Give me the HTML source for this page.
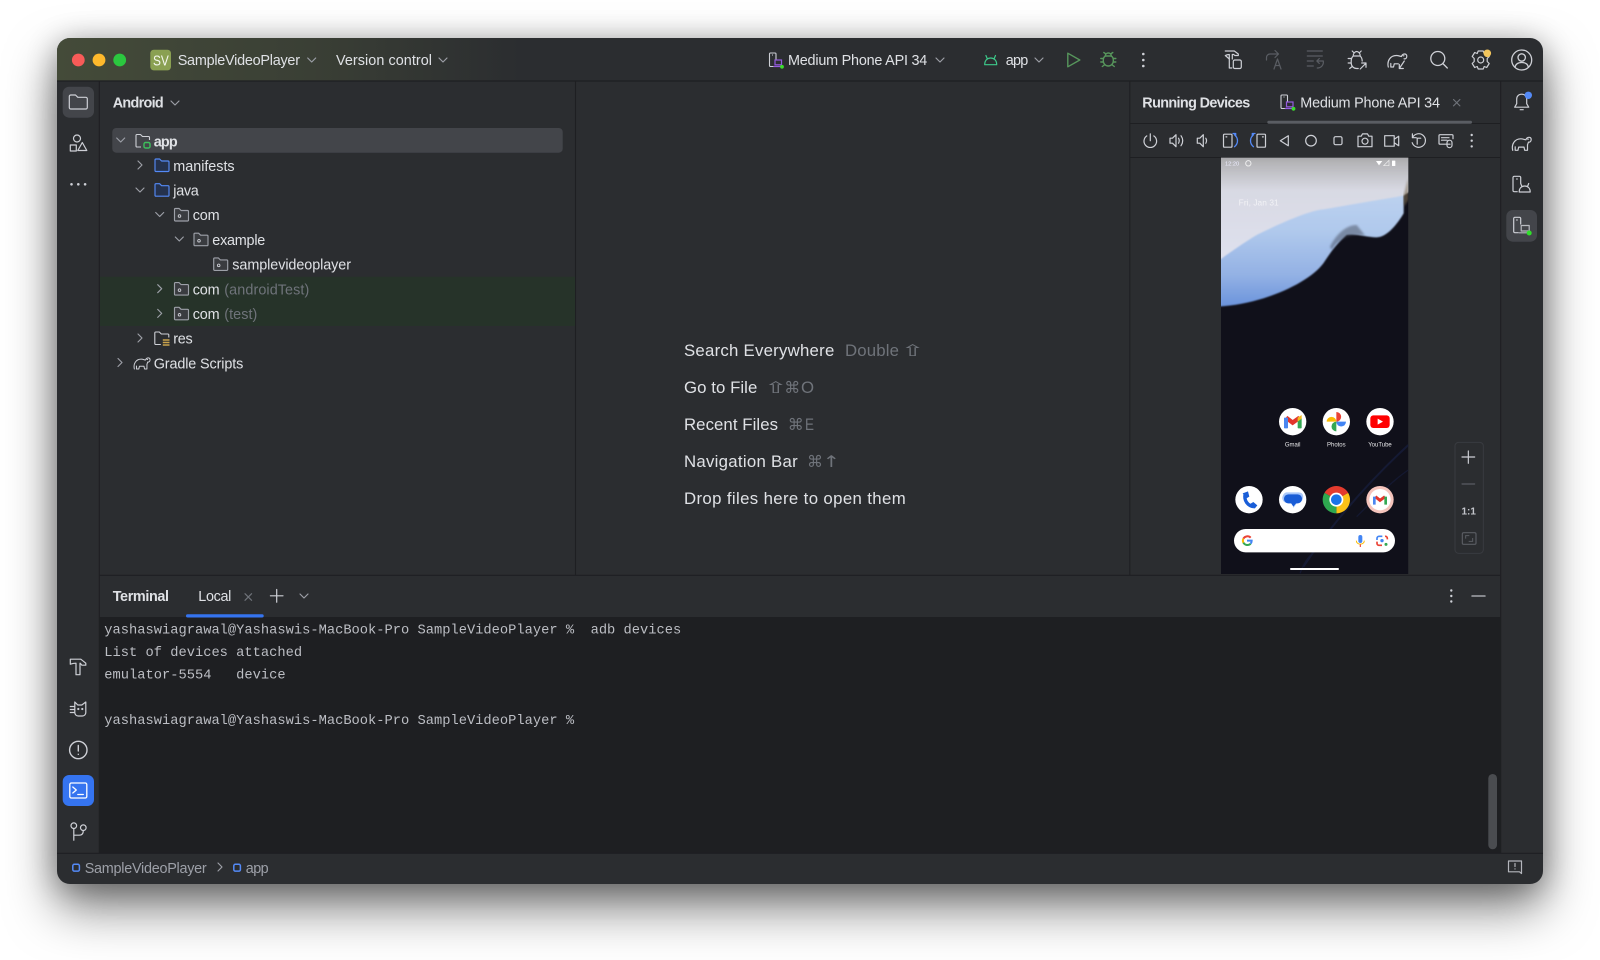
<!DOCTYPE html>
<html lang="en">
<head>
<meta charset="utf-8">
<title>Android Studio</title>
<style>
html,body{margin:0;padding:0;width:1600px;height:960px;overflow:hidden;background:#fff}
#win{position:absolute;left:57px;top:38px;width:1486px;height:846px;border-radius:13px;background:#2b2d30;box-shadow:0 24px 50px 0 rgba(0,0,0,.5),0 4px 30px rgba(0,0,0,.3)}
svg{position:absolute;left:0;top:0;filter:blur(.35px)}
text{font-family:"Liberation Sans",sans-serif;font-size:14.4px;fill:#dfe1e5;white-space:pre}
.b{font-weight:700}
.g{fill:#6f737a}
.w{font-size:16.8px}
.h{font-size:16.8px;fill:#6f737a}
.hs{font-family:"DejaVu Sans",sans-serif;font-size:16px;fill:#6f737a;text-anchor:middle}
.m{font-family:"Liberation Mono",monospace;font-size:13.74px;fill:#bcbec4}
.s{fill:#9da0a8}
.i{fill:none;stroke:#ced0d6;stroke-width:1.2;stroke-linecap:round;stroke-linejoin:round}
.d{fill:none;stroke:#5a5d63;stroke-width:1.2;stroke-linecap:round;stroke-linejoin:round}
.c{fill:none;stroke:#9da0a8;stroke-width:1.15;stroke-linecap:round;stroke-linejoin:round}
.p text{fill:#e8e8ea;font-size:18px}
</style>
</head>
<body>
<div id="win"></div>
<svg width="1600" height="960" viewBox="0 0 1600 960" xmlns="http://www.w3.org/2000/svg">
<defs>
<linearGradient id="tb" x1="0" x2="1" y1="0" y2="0"><stop offset="0" stop-color="#444b39"/><stop offset=".55" stop-color="#3a3f35"/><stop offset="1" stop-color="#2b2d30"/></linearGradient>
<linearGradient id="wh" x1="0" x2="0" y1="0" y2="1"><stop offset="0" stop-color="#88888a"/><stop offset=".16" stop-color="#b5b5b8"/><stop offset=".38" stop-color="#d8d9e3"/><stop offset="1" stop-color="#dfe2ef"/></linearGradient>
<linearGradient id="bl" x1="0" x2="0" y1="0" y2="1"><stop offset="0" stop-color="#c0d4f0"/><stop offset=".4" stop-color="#b0c9ec"/><stop offset=".75" stop-color="#93b1e4"/><stop offset="1" stop-color="#6a93dc"/></linearGradient>
<filter id="bb" x="-5%" y="-5%" width="110%" height="110%"><feGaussianBlur stdDeviation="3.500"/></filter>
<filter id="bs" x="-5%" y="-5%" width="110%" height="110%"><feGaussianBlur stdDeviation="2.500"/></filter>
<clipPath id="ph"><rect x="93" y="23" width="562" height="1249"/></clipPath>
<path id="cd" class="c" d="M-4-2L0 2L4-2"/>
<path id="cr" class="c" d="M-2-4L2 0L-2 4"/>
<g id="fb"><path d="M-7-5.500a1 1 0 0 1 1-1h3.600l2 2H6a1 1 0 0 1 1 1V5a1 1 0 0 1-1 1H-6a1 1 0 0 1-1-1z" fill="#25324d" stroke="#548af7" stroke-width="1.150" stroke-linejoin="round"/></g>
<g id="fp"><path d="M-7-5.500a1 1 0 0 1 1-1h3.600l2 2H6a1 1 0 0 1 1 1V5a1 1 0 0 1-1 1H-6a1 1 0 0 1-1-1z" fill="#3a3c40" stroke="#9da0a8" stroke-width="1.150" stroke-linejoin="round"/><circle cx="-2" cy="1" r="1.300" fill="none" stroke="#ced0d6" stroke-width=".9"/></g>
<g id="dev"><path d="M0-.5V-6.500a1 1 0 0 0-1-1h-4.500a1 1 0 0 0-1 1V5a1 1 0 0 0 1 1H-3" fill="none" stroke="#ced0d6" stroke-width="1.100" stroke-linecap="round" stroke-linejoin="round"/><path d="M-4-5.500h1" stroke="#ced0d6" stroke-width="1"/><rect x="-1" y="-.5" width="6.500" height="4.800" fill="none" stroke="#955ae0" stroke-width="1.200"/><path d="M-2.500 6H6.500" stroke="#955ae0" stroke-width="1.200"/><circle cx="6" cy="6.300" r="1.900" fill="#3ddc2e"/></g>
<path id="gr" class="i" d="M-9 7C-10.500 1-7-4.500-1-4.500C1.500-4.500 3-3.500 4.200-3.500C5-6.500 9.500-7 9.500-3.800C9.500-1.800 8-.8 6.800-1.200L5.800 1.500V7H3L2.300 3.800H-3L-3.800 7H-6.500L-6.500 3.500M6-4.200h.6"/>
</defs>

<!-- title bar -->
<path d="M57 81V51a13 13 0 0 1 13-13H520V81z" fill="url(#tb)"/>
<path d="M57 81H1543" stroke="#1e1f22" stroke-width="1.200"/>
<circle cx="78.300" cy="60" r="6.400" fill="#f85b58"/><circle cx="99" cy="60" r="6.400" fill="#feb92c"/><circle cx="119.700" cy="60" r="6.400" fill="#2bc83f"/>
<rect x="150.300" y="49.700" width="20.700" height="20.700" rx="3.500" fill="#8aa052"/>
<text transform="translate(153 65.300) scale(.82 1)" style="font-size:14.500px;fill:#f4f6ee">SV</text>
<text x="177.700" y="65" textLength="122.300">SampleVideoPlayer</text>
<use href="#cd" x="311.700" y="60"/>
<text x="336" y="65" textLength="96">Version control</text>
<use href="#cd" x="443" y="60"/>

<use href="#dev" x="776" y="60.500"/>
<text x="788" y="65" textLength="139.300">Medium Phone API 34</text>
<use href="#cd" x="940" y="60"/>
<g transform="translate(990.700 60.500)" fill="none" stroke="#3dc98a" stroke-width="1.200" stroke-linejoin="round" stroke-linecap="round"><path d="M-6 4.200C-6-.5-3-2.500 0-2.500S6-.5 6 4.200zM-3.500-2-4.800-5M3.500-2 4.800-5"/></g>
<text x="1005.700" y="65" textLength="22.600">app</text>
<use href="#cd" x="1039" y="60"/>
<path d="M-5.500-6.800L6.500 0L-5.500 6.800Z" transform="translate(1073.300 60)" fill="none" stroke="#57965c" stroke-width="1.400" stroke-linejoin="round"/>
<g transform="translate(1108.300 60)" fill="none" stroke="#57965c" stroke-width="1.400" stroke-linecap="round"><path d="M-3-4h6c1.500 1 2 2.500 2 4v1a5 5 0 0 1-10 0V0c0-1.500.5-3 2-4z"/><path d="M-3-4c0-2 1.500-3 3-3s3 1 3 3M-3-6.500-4.500-7.500M3-6.500 4.500-7.500M-5-1.500H-7.500M5-1.500H7.500M-5 2H-7.500M5 2H7.500M-4 5-6 6.500M4 5 6 6.500"/></g>
<g fill="#ced0d6"><circle cx="1143.300" cy="54" r="1.300"/><circle cx="1143.300" cy="60" r="1.300"/><circle cx="1143.300" cy="66" r="1.300"/></g>

<!-- top right icons -->
<g transform="translate(1233.300 60)" class="i"><path d="M-8-9H1L5-6V-4.500H1.500L.5-5.500H-1V-1M-4-1V-5.500C-5.500-5.500-7-5-8-4.500z"/><path d="M-4-1V8H-1.500"/><rect x="0" y="0" width="8" height="8.500" rx="1.500"/></g>
<g transform="translate(1275 60)" class="d"><path d="M-1-6H-5a3.500 3.500 0 0 0-3.500 3.500V0M3.500-6H-2M0-9.500 3.500-6 0-2.500"/><path d="M-1 9 2.500-1 6 9M.2 5.500H4.800"/></g>
<g transform="translate(1315.300 60)" class="d"><path d="M-8-9H7M-8-4H7M-8 1H-2M-8 6H-2M8 1H1.500M4-1.500 1.500 1 4 3.500M8 1C8.500 5 6 8 2 8"/></g>
<g transform="translate(1356.700 60)" class="i"><path d="M-3.500-4H3.500C5-2.500 5.500-1 5.500 1M-3.500-4C-5-2.500-5.500-1-5.500 1V3a5.500 5.500 0 0 0 5.500 5.500H1.500M-3.500-4C-3.500-7-1.500-8.500 0-8.500S3.500-7 3.500-4M-3-7.500-4.500-9M3-7.500 4.500-9M-5.500-1.500H-8.500M-5.500 3H-8.500M-4.500 6.500-7 8.500M3.500 9 9 3.500M5 3H9.300V7.300"/></g>
<g transform="translate(1397.300 60)" class="i"><path d="M-9 7C-10.500 1-7-4.500-1-4.500C1.500-4.500 3-3.500 4.200-3.500C5-6.500 9.500-7 9.500-3.800C9.500-1.800 8-.8 6.800-1.200M-6.500 7V3.500M-6.500 7H-3.800L-3 3.800H1M6-4.200h.6M7 1 2 8.500M2 4.500V8.500H6"/></g>
<g transform="translate(1439.300 60)" class="i" style="stroke-width:1.300"><circle cx="-1.500" cy="-1.500" r="7"/><path d="M3.500 3.500 8 8"/></g>
<g transform="translate(1480.700 60)" class="i"><path d="M-2.500-9H2.500L3.500-6.500L6-7.500L8.500-3.500L6.500-1.500V1.500L8.500 3.500L6 7.500L3.500 6.500L2.500 9H-2.500L-3.500 6.500L-6 7.500L-8.500 3.500L-6.500 1.500V-1.500L-8.500-3.500L-6-7.500L-3.500-6.500Z"/><circle r="3"/></g>
<circle cx="1487.300" cy="53.300" r="3.800" fill="#f2c55c"/>
<g transform="translate(1521.700 60)" class="i" style="stroke-width:1.300"><circle r="10"/><circle cy="-2.500" r="3.700"/><path d="M-6.700 7.300C-6 3.500-3 2.500 0 2.500S6 3.500 6.700 7.300"/></g>

<!-- dividers -->
<path d="M99.300 81V853M575.500 81V575M1129.800 81V575M1500.700 81V853M99 575.300H1500M1130 123.500H1500M1130 157.500H1500" stroke="#1e1f22" stroke-width="1.100" fill="none"/>

<!-- left stripe -->
<rect x="62.700" y="86.700" width="31.300" height="31" rx="6.500" fill="#43454a"/>
<path class="i" transform="translate(78.300 102)" d="M-9-5.500a1.500 1.500 0 0 1 1.500-1.500h4.700l2.300 2.300H7.500A1.500 1.500 0 0 1 9-3.200V5.500A1.500 1.500 0 0 1 7.500 7h-15A1.500 1.500 0 0 1-9 5.500z"/>
<g transform="translate(78.300 143)" class="i"><circle cx="-1.300" cy="-4.500" r="3.500"/><rect x="-8" y="2" width="6" height="6"/><path d="M4-.5L8.500 7.500H-.5Z"/></g>
<g fill="#ced0d6"><circle cx="71.500" cy="184.300" r="1.300"/><circle cx="78.300" cy="184.300" r="1.300"/><circle cx="85.100" cy="184.300" r="1.300"/></g>

<g transform="translate(78.300 666.700)" class="i"><path d="M-8-7.500H2.500L7.500-3.500V-1.500H3.500L2-3.500H1.700V8H-2.300V-3.500C-4-3.500-6.500-3-8-2.500z"/></g>
<g transform="translate(78.300 709)" class="i"><path d="M-3.500-7-.5-4H3.500L7.500-7V3.500C7.500 5.500 6 7 4 7H0C-2 7-3.500 5.500-3.500 3.500zM-8-2.500H-4M-8 .5H-4M-8 3.500H-4"/><circle cx="0" cy="0" r=".5"/><circle cx="4" cy="0" r=".5"/></g>
<g transform="translate(78.300 750)" class="i" style="stroke-width:1.400"><circle r="8.700"/><path d="M0-4.500V1M0 4.300V4.400"/></g>
<rect x="62.700" y="775" width="31.300" height="31" rx="6.500" fill="#3574f0"/>
<g transform="translate(78.300 790.500)" fill="none" stroke="#fff" stroke-width="1.300" stroke-linecap="round" stroke-linejoin="round"><rect x="-8.500" y="-7.500" width="17" height="15" rx="1.500"/><path d="M-5.500-3.500-2-.5-5.500 2.500M-.5 4H5"/></g>
<g transform="translate(78.300 831.700)" class="i"><circle cx="-4.500" cy="-6" r="2.800"/><circle cx="5" cy="-4" r="2.800"/><path d="M-4.500-3.200V8.500M-4.500 3.500H1C3.500 3.500 5 2 5-1.200"/></g>

<!-- project panel -->
<text x="112.700" y="107.300" class="b" textLength="51">Android</text>
<use href="#cd" x="175" y="103"/>
<rect x="112.300" y="128" width="450.400" height="24.700" rx="4" fill="#43454a"/>
<rect x="100" y="276.700" width="475" height="49.300" fill="#263329"/>

<use href="#cd" x="120.700" y="140"/>
<g transform="translate(142.500 141)"><path d="M-1.500 6H-5.500a1 1 0 0 1-1-1V-5.500a1 1 0 0 1 1-1H-2l2 2H6a1 1 0 0 1 1 1V-1" fill="none" stroke="#ced0d6" stroke-width="1.100" stroke-linejoin="round"/><rect x="1.500" y="1.500" width="6" height="5.500" rx="1.500" fill="none" stroke="#3dc05c" stroke-width="1.400"/></g>
<text x="153.700" y="146.400" class="b" textLength="24">app</text>

<use href="#cr" x="140" y="165"/><use href="#fb" x="162" y="165.500"/>
<text x="173.300" y="170.800" textLength="61.300">manifests</text>
<use href="#cd" x="140" y="190"/><use href="#fb" x="162" y="190.200"/>
<text x="173.300" y="195.500" textLength="25.500">java</text>
<use href="#cd" x="159.700" y="214.500"/><use href="#fp" x="181.500" y="215"/>
<text x="192.700" y="220.200" textLength="26.900">com</text>
<use href="#cd" x="179.300" y="239"/><use href="#fp" x="201" y="239.700"/>
<text x="212.300" y="244.900" textLength="53">example</text>
<use href="#fp" x="220.700" y="264.400"/>
<text x="232.300" y="269.600" textLength="118.700">samplevideoplayer</text>
<use href="#cr" x="159.700" y="288.700"/><use href="#fp" x="181.500" y="289.100"/>
<text x="192.700" y="294.300" textLength="26.900">com</text>
<text x="224.300" y="294.300" class="g" textLength="85">(androidTest)</text>
<use href="#cr" x="159.700" y="313.400"/><use href="#fp" x="181.500" y="313.800"/>
<text x="192.700" y="319" textLength="26.900">com</text>
<text x="224.300" y="319" class="g" textLength="33">(test)</text>
<use href="#cr" x="140" y="338"/>
<g transform="translate(161.800 338.500)"><path d="M-1 6H-6a1 1 0 0 1-1-1V-5.500a1 1 0 0 1 1-1h3.500l2 2H6a1 1 0 0 1 1 1V-1" fill="none" stroke="#ced0d6" stroke-width="1.100" stroke-linejoin="round"/><path d="M1 1.500H7.700M1 4H7.700M1 6.500H7.700" stroke="#c9a34c" stroke-width="1.400"/></g>
<text x="173.300" y="343.700" textLength="19.400">res</text>
<use href="#cr" x="120" y="362.500"/>
<use href="#gr" transform="translate(142 363) scale(.85)"/>
<text x="153.700" y="368.400" textLength="89.600">Gradle Scripts</text>

<!-- welcome -->
<text x="684" y="355.800" class="w" textLength="150.300">Search Everywhere</text>
<text x="845" y="355.800" class="h" textLength="54">Double</text>
<text transform="translate(912.500 356) scale(1.8 1)" class="hs">⇧</text>
<text x="684" y="392.800" class="w" textLength="73.300">Go to File</text>
<text transform="translate(775.700 393) scale(1.8 1)" class="hs">⇧</text>
<text x="792.300" y="392.800" class="hs">⌘</text>
<text x="801" y="392.800" class="h">O</text>
<text x="684" y="430" class="w" textLength="94">Recent Files</text>
<text x="795.700" y="430" class="hs">⌘</text>
<text transform="translate(805 430) scale(.8 1)" class="h">E</text>
<text x="684" y="467" class="w" textLength="113.700">Navigation Bar</text>
<text x="815" y="467" class="hs">⌘</text>
<text transform="translate(831.300 467) scale(1.3 1)" class="hs">↑</text>
<text x="684" y="504" class="w" textLength="221.700">Drop files here to open them</text>

<!-- running devices header -->
<text x="1142.300" y="107.300" class="b" textLength="108">Running Devices</text>
<use href="#dev" x="1287.500" y="102.500"/>
<text x="1300.300" y="107.300" textLength="139.700">Medium Phone API 34</text>
<path class="c" d="M1453.500 99.500L1459.900 105.900M1459.900 99.500L1453.500 105.900" style="stroke:#6f737a"/>
<path d="M1268.800 122.300H1470.500" stroke="#5a5d63" stroke-width="3" stroke-linecap="round"/>

<!-- device toolbar -->
<g class="i" transform="translate(0 140.700)">
<path transform="translate(1150.300 0)" d="M-3.500-4.800A6.300 6.300 0 1 0 3.500-4.800M0-6.800V0"/>
<path transform="translate(1177 0)" d="M-7-2.500H-4.500L-1-6V6L-4.500 2.500H-7ZM1.500-2.500Q3 0 1.500 2.500M4-5Q7.500 0 4 5"/>
<path transform="translate(1202.300 0)" d="M-5-2.500H-2.500L1-6V6L-2.500 2.500H-5ZM3.500-2.500Q5 0 3.500 2.500"/>
<rect x="1223.500" y="-6.500" width="8.500" height="13" rx="1"/><path d="M1226 -3.800H1226.800"/>
<rect x="1257" y="-6.500" width="8.500" height="13" rx="1"/><path d="M1262.500 -3.800H1263.300"/>
<path transform="translate(1284.300 0)" d="M4-5L-4 0L4 5Z"/>
<circle cx="1311" cy="0" r="5.300"/>
<rect x="1334" y="-4" width="8" height="8" rx="1.500"/>
<path transform="translate(1365 0)" d="M-7-4.500H-3.800L-2.500-6.800H2.500L3.800-4.500H7V6H-7Z"/><circle cx="1365" cy=".5" r="3"/>
<path transform="translate(1391.700 0)" d="M-7-5H2.500V5.500H-7ZM2.500-1.500L7-4.500V5L2.500 2Z"/>
<path transform="translate(1418.700 0)" d="M-6-3.500A6.800 6.800 0 1 1-6.500 2M-6.300-6.800V-3H-2.500M-1.500 3.500V-2.500H2"/>
<path transform="translate(1446 0)" d="M4 3.500H-6a1 1 0 0 1-1-1V-5a1 1 0 0 1 1-1H6a1 1 0 0 1 1 1V-2M-4.500-3H3M-4.500-.5H1"/><rect x="1447" y="-.5" width="5" height="7.500" rx="2.500"/>
</g>
<g fill="none" stroke="#548af7" stroke-width="1.300" stroke-linecap="round" stroke-linejoin="round"><path d="M1234.500 134.700C1238.500 138 1238.500 143.500 1234.500 146.700M1233 133.500H1235.700V136.200"/><path d="M1253.500 134.700C1249.500 138 1249.500 143.500 1253.500 146.700M1255 133.500H1252.300V136.200"/></g>
<g fill="#ced0d6"><circle cx="1471.700" cy="135" r="1.200"/><circle cx="1471.700" cy="140.700" r="1.200"/><circle cx="1471.700" cy="146.400" r="1.200"/></g>

<!-- right stripe -->
<g transform="translate(1521.700 101.700)" class="i"><path d="M-7 5.500H7L5 2V-2.500C5-5.500 3-7.500 0-7.500S-5-5.500-5-2.500V2ZM-1.500 8H1.500"/></g>
<circle cx="1528.300" cy="95.300" r="3.700" fill="#548af7"/>
<use href="#gr" x="1521.700" y="143.300"/>
<g transform="translate(1521.700 185)" class="i"><path d="M-1-2V-7.500a1.200 1.200 0 0 0-1.200-1.200H-7.500a1.200 1.200 0 0 0-1.200 1.200V5.500a1.200 1.200 0 0 0 1.200 1.200H-4.500M-5-6H-4.500"/><path d="M-2.500 7C-2.500 3 0 1 3 1S8.500 3 8.500 7ZM0 1-1-1.500M6 1 7-1.500"/></g>
<rect x="1506.300" y="210" width="30.700" height="31.700" rx="6.500" fill="#43454a"/>
<g transform="translate(1521.700 226)"><path class="i" d="M-1-2V-7.500a1.200 1.200 0 0 0-1.200-1.200H-6.800a1.200 1.200 0 0 0-1.200 1.200V5.500a1.200 1.200 0 0 0 1.200 1.200H-3.500M-5-6H-4.500"/><rect x="-.5" y="-.5" width="8" height="5.500" class="i" style="stroke:#b8bac0"/><path d="M-2.500 6.800H6" class="i" style="stroke:#b8bac0"/><circle cx="7.500" cy="7" r="2.500" fill="#2fe02a"/></g>

<!-- phone (coords in 3x zoom units) -->
<g transform="translate(1190 150) scale(.33333)" class="p">
<g clip-path="url(#ph)">
<rect x="93" y="23" width="562" height="1249" fill="#10101a"/>
<path d="M340 1250C420 1130 520 1010 655 885" fill="none" stroke="#151a34" stroke-width="6"/>
<path d="M500 1100C560 1040 610 990 655 960M330 1270C345 1230 360 1215 380 1200" fill="none" stroke="#141830" stroke-width="4"/>
<path d="M60 90H642L641 190C620 225 590 262 560 262C530 262 500 250 470 255C440 280 420 310 400 340C370 380 300 420 220 445C170 460 120 470 60 470Z" fill="url(#bl)" filter="url(#bs)"/>
<path d="M425 300C445 268 480 250 525 256L500 225C470 225 440 250 420 290Z" fill="#3b4150" opacity=".45" filter="url(#bb)"/>
<path d="M60-20H700V90C680 110 660 125 641 137C500 160 450 170 400 178C370 180 300 205 200 255C150 285 110 315 60 350Z" fill="url(#wh)" filter="url(#bs)"/>
<path d="M640 137C645 125 650 100 655 85V150L642 170Z" fill="#7a6a50" opacity=".6" filter="url(#bb)"/>
</g>
<text x="105" y="46" style="font-size:17px;fill:#eef">12:20</text>
<circle cx="175" cy="40" r="8" fill="none" stroke="#eee" stroke-width="3"/>
<path d="M558 33H577L567 46Z" fill="#fff"/><path d="M597 31V47H581Z" fill="none" stroke="#eee" stroke-width="2"/><rect x="606" y="32" width="10" height="16" rx="1" fill="#fff"/>
<text x="146" y="167" style="font-size:25px;fill:#f2f2f6" textLength="120">Fri, Jan 31</text>

<!-- row 1 -->
<circle cx="308" cy="815" r="41" fill="#fff"/>
<path d="M288 803L308 818L329 803" fill="none" stroke="#e3352c" stroke-width="13"/>
<rect x="282" y="803" width="12" height="32" rx="2" fill="#4a86f0"/><rect x="323" y="803" width="12" height="32" rx="2" fill="#34a853"/><path d="M323 803L335 795V806L323 815Z" fill="#f5bc1c"/>
<circle cx="439" cy="815" r="41" fill="#fff"/>
<path d="M410 815a14.500 14.500 0 0 1 29 0z" fill="#fbbc04"/><path d="M439 786a14.500 14.500 0 0 1 0 29z" fill="#ea4335"/><path d="M468 815a14.500 14.500 0 0 1-29 0z" fill="#4285f4"/><path d="M439 844a14.500 14.500 0 0 1 0-29z" fill="#34a853"/>
<circle cx="570" cy="815" r="41" fill="#fff"/>
<rect x="541" y="796" width="58" height="38" rx="9" fill="#f00"/><path d="M563 806V824L579 815Z" fill="#fff"/>
<text x="308" y="889" text-anchor="middle">Gmail</text>
<text x="439" y="889" text-anchor="middle">Photos</text>
<text x="570" y="889" text-anchor="middle">YouTube</text>

<!-- row 2 -->
<circle cx="177" cy="1049" r="41" fill="#fff"/>
<path d="M166 1030C160 1052 174 1068 192 1070" fill="none" stroke="#1a5ed8" stroke-width="10"/><path d="M158 1030L174 1024L178 1040L168 1046ZM180 1062L190 1056L202 1066L194 1076Z" fill="#1a5ed8"/>
<circle cx="308" cy="1049" r="41" fill="#fff"/>
<path d="M290 1027H326C340 1027 342 1040 338 1048C334 1058 326 1060 320 1060L310 1074V1060H296C280 1060 274 1048 278 1038C281 1030 286 1027 290 1027Z" fill="#a8c7fa"/>
<rect x="282" y="1033" width="54" height="27" rx="13" fill="#1a5dd6"/><path d="M302 1058H320L310 1070Z" fill="#1a5dd6"/>
<path d="M439 1049L403.500 1028.500A41 41 0 0 1 474.500 1028.500Z" fill="#e33b2e"/><path d="M439 1049L474.500 1028.500A41 41 0 0 1 439 1090Z" fill="#fbc116"/><path d="M439 1049L439 1090A41 41 0 0 1 403.500 1028.500Z" fill="#2ea84f"/>
<circle cx="439" cy="1049" r="21" fill="#fff"/><circle cx="439" cy="1049" r="16" fill="#1a73e8"/>
<circle cx="570" cy="1049" r="41" fill="#f5c4bc"/><circle cx="570" cy="1049" r="32" fill="#fff"/>
<path d="M556 1040L570 1051L585 1040" fill="none" stroke="#e3352c" stroke-width="9"/>
<rect x="549" y="1040" width="8" height="24" rx="1" fill="#4a86f0"/><rect x="583" y="1040" width="8" height="24" rx="1" fill="#34a853"/>

<!-- search -->
<rect x="132" y="1137" width="483" height="70" rx="35" fill="#fff"/>
<g fill="none" stroke-width="6"><path d="M182 1163A14 14 0 0 0 160 1166" stroke="#ea4335"/><path d="M160 1166A14 14 0 0 0 160 1178" stroke="#fbbc04"/><path d="M160 1178A14 14 0 0 0 182 1181" stroke="#34a853"/><path d="M182 1181A14 14 0 0 0 185 1172H171" stroke="#4285f4"/></g>
<rect x="505" y="1155" width="12" height="24" rx="6" fill="#4285f4"/><path d="M499 1172C499 1186 523 1186 523 1172" fill="none" stroke="#fbbc04" stroke-width="3"/><path d="M511 1183V1191" stroke="#ea4335" stroke-width="3.500"/>
<g fill="none" stroke-width="5"><path d="M561 1170V1165A6 6 0 0 1 567 1159H577" stroke="#4285f4"/><path d="M585 1159A6 6 0 0 1 592 1165V1168" stroke="#ea4335"/><path d="M561 1175V1180A6 6 0 0 0 567 1186H576" stroke="#ea4335"/><circle cx="576" cy="1172" r="5" fill="#4285f4" stroke="none"/></g><circle cx="588" cy="1183" r="4.500" fill="#34a853"/>
<rect x="300" y="1254" width="147" height="6" rx="3" fill="#fff"/>

<!-- zoom controls -->
<rect x="795" y="877" width="85" height="333" rx="11" fill="#2b2d30" stroke="#393b40" stroke-width="3"/>
<path d="M835 903V940M816 921H854" stroke="#ced0d6" stroke-width="3.500" stroke-linecap="round"/>
<path d="M816 1002H854" stroke="#5a5d63" stroke-width="3.500" stroke-linecap="round"/>
<text x="836" y="1094" text-anchor="middle" style="font-size:30px;font-weight:700;fill:#c4c6cc">1:1</text>
<rect x="817" y="1148" width="41" height="35" rx="4" fill="none" stroke="#5a5d63" stroke-width="3.500"/><path d="M827 1166V1157H838M848 1164V1174H836" fill="none" stroke="#5a5d63" stroke-width="3"/>
</g>

<!-- terminal -->
<rect x="99.800" y="617" width="1400.400" height="236" fill="#1e1f22"/>
<text x="112.700" y="601" class="b" textLength="56.300">Terminal</text>
<text x="198.300" y="601" textLength="33">Local</text>
<path class="c" d="M245 593.700L251.600 600.300M251.600 593.700L245 600.300" style="stroke:#6f737a"/>
<path class="i" d="M276.700 589.500V602.200M270.400 595.800H283"/>
<use href="#cd" x="304" y="596"/>
<rect x="186" y="614.300" width="77.700" height="3.200" rx="1.600" fill="#3574f0"/>
<g fill="#ced0d6"><circle cx="1451.300" cy="590.500" r="1.200"/><circle cx="1451.300" cy="596" r="1.200"/><circle cx="1451.300" cy="601.500" r="1.200"/></g>
<path d="M1472 596H1485" stroke="#ced0d6" stroke-width="1.500" stroke-linecap="round" opacity=".75"/>
<text x="104.300" y="633.400" class="m">yashaswiagrawal@Yashaswis-MacBook-Pro SampleVideoPlayer %  adb devices</text>
<text x="104.300" y="656" class="m">List of devices attached</text>
<text x="104.300" y="678.700" class="m">emulator-5554   device</text>
<text x="104.300" y="724" class="m">yashaswiagrawal@Yashaswis-MacBook-Pro SampleVideoPlayer %</text>
<rect x="1488.300" y="774" width="8.700" height="75.300" rx="4.300" fill="#4a4c50"/>

<!-- status bar -->
<path d="M57 853.300H1543" stroke="#1e1f22" stroke-width="1.100"/>
<rect x="72.800" y="864.300" width="6.600" height="6.800" rx="1.500" fill="none" stroke="#548af7" stroke-width="1.500"/>
<text x="84.700" y="872.800" class="s" textLength="122">SampleVideoPlayer</text>
<use href="#cr" x="220" y="867"/>
<rect x="233.800" y="864.300" width="6.600" height="6.800" rx="1.500" fill="none" stroke="#548af7" stroke-width="1.500"/>
<text x="245.700" y="872.800" class="s" textLength="23">app</text>
<g transform="translate(1515 867)" class="i" style="stroke-width:1.200;stroke:#b4b6bc"><path d="M-6.500-6H6.500V6.500L4.500 4.800H-6.500ZM0-3.500V-.5M0 1.800V2"/></g>
</svg>
</body>
</html>
